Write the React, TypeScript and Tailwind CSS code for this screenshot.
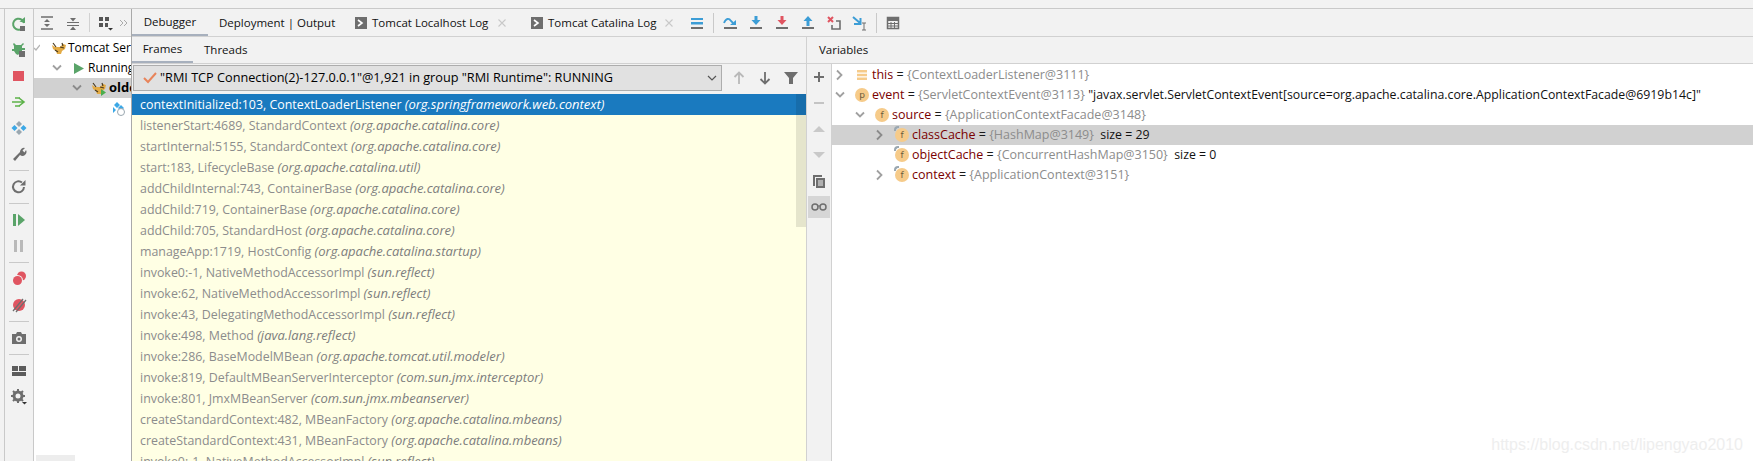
import type { ReactNode } from 'react';

const frames: [string, string][] = [
  ['listenerStart:4689, StandardContext', '(org.apache.catalina.core)'],
  ['startInternal:5155, StandardContext', '(org.apache.catalina.core)'],
  ['start:183, LifecycleBase', '(org.apache.catalina.util)'],
  ['addChildInternal:743, ContainerBase', '(org.apache.catalina.core)'],
  ['addChild:719, ContainerBase', '(org.apache.catalina.core)'],
  ['addChild:705, StandardHost', '(org.apache.catalina.core)'],
  ['manageApp:1719, HostConfig', '(org.apache.catalina.startup)'],
  ['invoke0:-1, NativeMethodAccessorImpl', '(sun.reflect)'],
  ['invoke:62, NativeMethodAccessorImpl', '(sun.reflect)'],
  ['invoke:43, DelegatingMethodAccessorImpl', '(sun.reflect)'],
  ['invoke:498, Method', '(java.lang.reflect)'],
  ['invoke:286, BaseModelMBean', '(org.apache.tomcat.util.modeler)'],
  ['invoke:819, DefaultMBeanServerInterceptor', '(com.sun.jmx.interceptor)'],
  ['invoke:801, JmxMBeanServer', '(com.sun.jmx.mbeanserver)'],
  ['createStandardContext:482, MBeanFactory', '(org.apache.catalina.mbeans)'],
  ['createStandardContext:431, MBeanFactory', '(org.apache.catalina.mbeans)'],
  ['invoke0:-1, NativeMethodAccessorImpl', '(sun.reflect)'],
];

function Ico({ children, w = 16, h = 16 }: { children: ReactNode; w?: number; h?: number }) {
  return (
    <svg width={w} height={h} viewBox={`0 0 ${w} ${h}`} className="shrink-0">
      {children}
    </svg>
  );
}

function Chevron({ open, color = '#a0a0a0' }: { open?: boolean; color?: string }) {
  return (
    <Ico w={12} h={12}>
      <path d={open ? 'M1 3.500l4 4 4-4' : 'M2 1.500l4.500 4.500-4.500 4.500'} fill="none" stroke={color} strokeWidth="1.800" />
    </Ico>
  );
}

function Cat({ running }: { running?: boolean }) {
  return (
    <Ico>
      <path d="M1 5l3 2 5 0 3-3 3 1-1 4-3 2-1 3H6l-1-3-3-2z" fill="#e3ab45" />
      <path d="M2 3l3 4M4 10l3 2M9 7l4 1M11 3l1 3" stroke="#4a3b20" strokeWidth="1.200" fill="none" />
      {running && <path d="M10 9l5 3.500-5 3.500z" fill="#4cae4f" />}
    </Ico>
  );
}

function Close() {
  return (
    <Ico w={8} h={8}>
      <path d="M0.500 0.500l7 7M7.500 0.500l-7 7" stroke="#c8c8c8" strokeWidth="1.100" />
    </Ico>
  );
}

function LogIcon() {
  return (
    <span className="flex h-3 w-3 shrink-0 items-center justify-center bg-[#6e6e6e]">
      <Ico w={12} h={12}>
        <path d="M3 3l4 3-4 3" fill="none" stroke="#fff" strokeWidth="1.600" />
      </Ico>
    </span>
  );
}

function FieldIcon({ letter, mark }: { letter: string; mark?: boolean }) {
  return (
    <span className="relative flex h-[14px] w-[14px] shrink-0 items-center justify-center rounded-full bg-[#f6cb8a] font-['DejaVu_Sans',sans-serif] text-[9px] leading-none text-[#6b5a3a]">
      {letter}
      {mark && <span className="absolute -left-[1px] -top-[2px] h-[5px] w-[5px] rounded-tl-[4px] border-l-2 border-t-2 border-[#9aa7b0]" />}
    </span>
  );
}

function VarRow({
  indent,
  arrow,
  icon,
  name,
  type,
  extra,
  selected,
}: {
  indent: number;
  arrow?: 'open' | 'closed';
  icon: ReactNode;
  name: string;
  type: string;
  extra?: string;
  selected?: boolean;
}) {
  return (
    <div className={`flex h-5 items-center whitespace-pre text-[12.5px] ${selected ? 'bg-[#d1d1d1]' : ''}`}>
      <span style={{ width: indent }} className="shrink-0" />
      <span className="flex w-[20px] shrink-0 items-center">{arrow && <Chevron open={arrow === 'open'} color={selected ? '#8a8a8a' : '#a0a0a0'} />}</span>
      <span className="mr-[3px] flex w-[14px] shrink-0 items-center justify-center">{icon}</span>
      <span className="text-[#7a0000]">{name}</span>
      <span className="text-[#1a1a1a]"> = </span>
      <span className="text-[#8c8c8c]">{type}</span>
      {extra && <span className="text-[12.3px] text-[#111]">{extra}</span>}
    </div>
  );
}

function Sep() {
  return <div className="-my-[2px] h-px w-[20px] shrink-0 bg-[#c9c9c9]" />;
}

function LeftToolbar() {
  return (
    <div className="flex w-[29px] shrink-0 flex-col items-center gap-[10px] border-r border-[#c9c9c9] bg-[#f2f2f2] pt-[7px]">
      <Ico>
        <path d="M13 7a5.500 5.500 0 1 0-4 6.500" fill="none" stroke="#5aa469" strokeWidth="2" />
        <path d="M8.500 5.500l5.500 1.500V1z" fill="#5aa469" />
        <rect x="9" y="10" width="5" height="5" fill="#6e6e6e" />
      </Ico>
      <Ico>
        <path d="M3 1l2 2h5l2-2 1 1-2 2v2h3v2h-3v1l-4 4-2-1-2-3H1V7h2V4L2 2z" fill="#5aa469" />
        <rect x="8" y="9" width="6" height="6" fill="#6e6e6e" />
      </Ico>
      <Ico>
        <rect x="2" y="3" width="11" height="10" fill="#e05561" />
      </Ico>
      <Ico>
        <path d="M1 8h11M8 4l5 4-5 4" fill="none" stroke="#5db34a" strokeWidth="1.600" />
        <path d="M4 4h5M4 12h5" stroke="#5db34a" strokeWidth="1.400" />
      </Ico>
      <Ico>
        <path d="M8 1l3 3-3 3-3-3z" fill="#9aa7b0" />
        <path d="M3.500 5l3 3-3 3-3-3z" fill="#3ca8e6" />
        <path d="M12.500 5l3 3-3 3-3-3z" fill="#3ca8e6" />
        <path d="M8 9l3 3-3 3-3-3z" fill="#9aa7b0" />
      </Ico>
      <Ico>
        <path d="M2 13l7-7a4 4 0 0 1 5-4l-2.500 2.500 2 2L15 4a4 4 0 0 1-6 5l-5 6z" fill="#6e6e6e" />
      </Ico>
      <Sep />
      <Ico>
        <path d="M13 8a5.500 5.500 0 1 1-2-4.500" fill="none" stroke="#6e6e6e" strokeWidth="2" />
        <path d="M9 6.500l5.500 0V1z" fill="#6e6e6e" />
      </Ico>
      <Sep />
      <Ico>
        <rect x="2" y="2" width="3" height="12" fill="#5aa469" />
        <path d="M7 2l7 6-7 6z" fill="#5aa469" />
      </Ico>
      <Ico>
        <rect x="3" y="2" width="3" height="12" fill="#b9b9b9" />
        <rect x="9" y="2" width="3" height="12" fill="#b9b9b9" />
      </Ico>
      <Sep />
      <Ico>
        <circle cx="10.500" cy="5" r="4.500" fill="#e05561" />
        <circle cx="6.500" cy="9.500" r="5.500" fill="#f2f2f2" />
        <circle cx="6.500" cy="9.500" r="4.500" fill="#e05561" />
      </Ico>
      <Ico>
        <circle cx="8" cy="8" r="6" fill="#e05561" />
        <path d="M2 14L12 2M5 15L15 3" stroke="#6e6e6e" strokeWidth="1.300" />
      </Ico>
      <Sep />
      <Ico>
        <path d="M1 4h4l1-2h4l1 2h4v10H1z" fill="#6e6e6e" />
        <circle cx="8" cy="9" r="3" fill="#f2f2f2" />
        <circle cx="8" cy="9" r="1.500" fill="#6e6e6e" />
      </Ico>
      <Sep />
      <Ico>
        <rect x="1" y="3" width="6" height="5" fill="#5c5c5c" />
        <rect x="8" y="3" width="7" height="5" fill="#5c5c5c" />
        <rect x="1" y="9" width="14" height="4" fill="#5c5c5c" />
      </Ico>
      <Ico>
        <circle cx="7" cy="7" r="4" fill="none" stroke="#6e6e6e" strokeWidth="3" />
        <path d="M7 0v3M7 11v3M0 7h3M11 7h3M2 2l2 2M10 10l2 2M2 12l2-2M10 4l2-2" stroke="#6e6e6e" strokeWidth="2" />
        <path d="M11 13h5l-2.500 2.500z" fill="#333" />
      </Ico>
    </div>
  );
}

function ServicesTree() {
  return (
    <div className="relative flex w-[97px] shrink-0 flex-col overflow-hidden bg-white">
      <div className="flex h-[28px] shrink-0 items-center gap-[10px] border-b border-[#d1d1d1] bg-[#f2f2f2] pl-[5px]">
        <Ico>
          <path d="M2 2h12M2 14h12" stroke="#6e6e6e" strokeWidth="1.400" />
          <path d="M8 4l3 3H5zM8 12l3-3H5z" fill="#6e6e6e" />
        </Ico>
        <Ico>
          <path d="M2 7.500h12M2 10.500h12" stroke="#6e6e6e" strokeWidth="1" />
          <path d="M8 6.500l3-3.500H5zM8 11.500l3 3.500H5z" fill="#6e6e6e" />
        </Ico>
        <div className="-mx-[2px] h-[19px] w-px bg-[#d1d1d1]" />
        <Ico>
          <rect x="1" y="2" width="4" height="4" fill="#555" />
          <rect x="7" y="2" width="4" height="4" fill="#555" />
          <rect x="1" y="8" width="4" height="4" fill="#555" />
          <rect x="7" y="8" width="3" height="4" fill="#555" />
          <path d="M10 13h5l-2.500 2.500z" fill="#333" />
        </Ico>
        <span className="-ml-[5px]">
          <Ico w={9} h={8}>
            <path d="M1 1l3 3-3 3M5 1l3 3-3 3" fill="none" stroke="#aaa" />
          </Ico>
        </span>
      </div>
      <div className="pt-px whitespace-nowrap text-[12px] text-black">
        <div className="flex h-5 items-center">
          <Ico w={6} h={8}>
            <path d="M0 4l2 2 4-5" fill="none" stroke="#b5b5b5" strokeWidth="1.300" />
          </Ico>
          <span className="ml-[11px]">
            <Cat />
          </span>
          <span className="ml-[1px]">Tomcat Ser</span>
        </div>
        <div className="flex h-5 items-center pl-[18px]">
          <Chevron open />
          <span className="ml-[10px] flex">
            <Ico w={12} h={14}>
              <path d="M0 2l10 5.500-10 5.500z" fill="#5aa469" />
            </Ico>
          </span>
          <span className="ml-[2px]">Running</span>
        </div>
        <div className="flex h-5 items-center bg-[#d1d1d1] pl-[38px]">
          <Chevron open color="#8a8a8a" />
          <span className="ml-[7px]">
            <Cat running />
          </span>
          <span className="ml-[2px] text-[13px] font-bold">oldc</span>
        </div>
        <div className="flex h-5 items-center pl-[78px] pt-[2px]">
          <Ico>
            <path d="M5 1l3 3-3 3-3-3zM1 6l3 3-3 3zM9 4l3 3-3 3-3-3z" fill="#3ca8e6" />
            <circle cx="9" cy="11" r="3.500" fill="#fff" stroke="#9aa7b0" />
          </Ico>
        </div>
      </div>
      <div className="absolute bottom-0 left-[2px] h-[6px] w-[39px] bg-[#ededed]" />
    </div>
  );
}

function DebugTabs() {
  return (
    <div className="flex h-[28px] shrink-0 items-center whitespace-nowrap border-b border-[#d1d1d1] bg-[#f2f2f2] text-[11.5px] text-[#111]">
      <div className="flex h-full w-[76px] items-center justify-center border-b-[2px] border-[#a7b0bd]">Debugger</div>
      <div className="ml-[11px] w-[111px]">Deployment | Output</div>
      <div className="ml-[25px]">
        <LogIcon />
      </div>
      <span className="ml-[5px] w-[116px]">Tomcat Localhost Log</span>
      <span className="ml-[10px] flex">
        <Close />
      </span>
      <div className="ml-[25px]">
        <LogIcon />
      </div>
      <span className="ml-[5px] w-[106px]">Tomcat Catalina Log</span>
      <span className="ml-[11px] flex">
        <Close />
      </span>
      <div className="ml-[16px] flex items-center gap-[10px]">
        <Ico>
          <rect x="2" y="3" width="12" height="2" fill="#3c9dd6" />
          <rect x="2" y="7" width="12" height="2.500" fill="#3c9dd6" />
          <rect x="2" y="12" width="12" height="2" fill="#6e6e6e" />
        </Ico>
        <div className="-mx-[2px] h-[20px] w-px bg-[#c9c9c9]" />
        <Ico>
          <path d="M2 8c2-5 5-5 7-2l2 2" fill="none" stroke="#3c9dd6" strokeWidth="1.800" />
          <path d="M8 10h6V5z" fill="#3c9dd6" />
          <rect x="2" y="12" width="13" height="2" fill="#6e6e6e" />
        </Ico>
        <Ico>
          <path d="M6.500 1h3v4h3L8 10 3.500 5h3z" fill="#3c9dd6" />
          <rect x="2" y="12" width="12" height="2" fill="#6e6e6e" />
        </Ico>
        <Ico>
          <path d="M6.500 1h3v4h3L8 10 3.500 5h3z" fill="#e05561" />
          <rect x="2" y="12" width="12" height="2" fill="#6e6e6e" />
        </Ico>
        <Ico>
          <path d="M6.500 11h3V6h3L8 1 3.500 6h3z" fill="#3c9dd6" />
          <rect x="2" y="12" width="12" height="2" fill="#6e6e6e" />
        </Ico>
        <Ico>
          <path d="M2 2l5 5M7 2L2 7" stroke="#e05561" strokeWidth="2" />
          <path d="M10 6h4v8H6v-4" fill="none" stroke="#6e6e6e" strokeWidth="1.600" />
        </Ico>
        <Ico>
          <path d="M1 2l7 6M2 9h6.500V3" fill="none" stroke="#3c9dd6" strokeWidth="2" />
          <path d="M10 8h4M12 8v7M10 15h4" stroke="#6e6e6e" strokeWidth="1" />
        </Ico>
        <div className="-mx-[2px] h-[20px] w-px bg-[#c9c9c9]" />
        <Ico>
          <rect x="2.500" y="2.500" width="11" height="11" fill="none" stroke="#6e6e6e" strokeWidth="1.500" />
          <path d="M2 4.500h12" stroke="#6e6e6e" strokeWidth="3" />
          <path d="M6 7v6M9.500 7v6M3 8.500h10M3 11h10" stroke="#6e6e6e" strokeWidth="1" />
        </Ico>
      </div>
    </div>
  );
}

function FramesPanel() {
  return (
    <div className="flex w-[675px] shrink-0 flex-col overflow-hidden border-r border-[#d1d1d1]">
      <div className="flex h-[27px] shrink-0 items-center border-b border-[#d1d1d1] text-[11.5px] text-[#111]">
        <div className="flex h-full w-[61px] items-center justify-center border-b-[2px] border-[#a7b0bd]">Frames</div>
        <div className="ml-[11px]">Threads</div>
      </div>
      <div className="flex h-[30px] shrink-0 items-center pb-[2px] pl-[1px]">
        <div className="flex h-[26px] w-[589px] items-center border border-[#adadad] bg-[#e1e1e1] pl-[8px] pr-[3px] text-[12.7px] text-black">
          <Ico>
            <path d="M2 8l4 4 8-9" fill="none" stroke="#e8845a" strokeWidth="2" />
          </Ico>
          <span className="ml-[2px] flex-1 whitespace-nowrap">"RMI TCP Connection(2)-127.0.0.1"@1,921 in group "RMI Runtime": RUNNING</span>
          <Ico w={12} h={12}>
            <path d="M2 4l4 4 4-4" fill="none" stroke="#555" strokeWidth="1.200" />
          </Ico>
        </div>
        <div className="ml-[9px] flex gap-[10px]">
          <Ico>
            <path d="M8 14V3M3.500 7L8 2.500 12.500 7" fill="none" stroke="#b9b9b9" strokeWidth="1.800" />
          </Ico>
          <Ico>
            <path d="M8 2v11M3.500 9L8 13.500 12.500 9" fill="none" stroke="#6e6e6e" strokeWidth="1.800" />
          </Ico>
          <Ico>
            <path d="M1 2h14L10 8v6H6V8z" fill="#6e6e6e" />
          </Ico>
        </div>
      </div>
      <div className="relative flex-1 overflow-hidden bg-[#ffffe4] text-[12.4px]">
        <div className="flex h-[21px] items-center whitespace-pre bg-[#1a7abf] pl-[8px] pt-px text-white">
          <span>contextInitialized:103, ContextLoaderListener </span>
          <span className="text-[13px] italic">(org.springframework.web.context)</span>
        </div>
        {frames.map(([method, pkg], i) => (
          <div key={i} className="flex h-[21px] items-center whitespace-pre pl-[8px] pt-px text-[#8c8c8c]">
            <span>{method} </span>
            <span className="text-[13px] italic text-[#7d7d7d]">{pkg}</span>
          </div>
        ))}
        <div className="absolute right-0 top-0 h-[133px] w-[10px] bg-black/10" />
      </div>
    </div>
  );
}

function VariablesPanel() {
  return (
    <div className="flex min-w-0 flex-1 flex-col">
      <div className="flex h-[27px] shrink-0 items-center border-b border-[#d1d1d1] pl-[12px] text-[11.5px] text-[#111]">Variables</div>
      <div className="flex flex-1">
        <div className="flex w-[25px] shrink-0 flex-col items-center gap-[10px] border-r border-[#d1d1d1] bg-[#f2f2f2] pt-[5px]">
          <Ico>
            <path d="M8 3v10M3 8h10" stroke="#6e6e6e" strokeWidth="2" />
          </Ico>
          <Ico>
            <path d="M3 8h10" stroke="#c4c4c4" strokeWidth="2" />
          </Ico>
          <Ico>
            <path d="M2 11l6-6 6 6z" fill="#c9c9c9" />
          </Ico>
          <Ico>
            <path d="M2 5l6 6 6-6z" fill="#c9c9c9" />
          </Ico>
          <Ico>
            <path d="M2 2h9v2H4v9H2z" fill="#6e6e6e" />
            <path d="M5 5h9v10H5z" fill="#6e6e6e" />
            <path d="M7 8h5M7 10h5M7 12h5" stroke="#f2f2f2" />
          </Ico>
          <div className="-mt-[3px] flex h-[22px] w-[22px] items-center justify-center bg-[#d6d6d6]">
            <Ico>
              <circle cx="4" cy="8" r="3" fill="none" stroke="#6e6e6e" strokeWidth="1.500" />
              <circle cx="12" cy="8" r="3" fill="none" stroke="#6e6e6e" strokeWidth="1.500" />
              <path d="M7 7h2" stroke="#6e6e6e" />
            </Ico>
          </div>
        </div>
        <div className="min-w-0 flex-1 bg-white pt-[1px]">
          <VarRow
            indent={3}
            arrow="closed"
            icon={
              <Ico w={14} h={14}>
                <path d="M2 2h10v2.500H2zM2 5.800h10v2.500H2zM2 9.600h10v2.500H2z" fill="#f6cb8a" />
              </Ico>
            }
            name="this"
            type="{ContextLoaderListener@3111}"
          />
          <VarRow
            indent={3}
            arrow="open"
            icon={<FieldIcon letter="p" />}
            name="event"
            type="{ServletContextEvent@3113}"
            extra={' "javax.servlet.ServletContextEvent[source=org.apache.catalina.core.ApplicationContextFacade@6919b14c]"'}
          />
          <VarRow indent={23} arrow="open" icon={<FieldIcon letter="f" />} name="source" type="{ApplicationContextFacade@3148}" />
          <VarRow indent={43} arrow="closed" icon={<FieldIcon letter="f" mark />} name="classCache" type="{HashMap@3149}" extra="  size = 29" selected />
          <VarRow indent={43} icon={<FieldIcon letter="f" mark />} name="objectCache" type="{ConcurrentHashMap@3150}" extra="  size = 0" />
          <VarRow indent={43} arrow="closed" icon={<FieldIcon letter="f" mark />} name="context" type="{ApplicationContext@3151}" />
        </div>
      </div>
    </div>
  );
}

export default function App() {
  return (
    <div className="relative flex h-[461px] w-[1753px] flex-col overflow-hidden bg-[#f2f2f2] font-['Open_Sans',sans-serif]">
      <div className="h-[9px] shrink-0 border-b border-[#c9c9c9]" />
      <div className="flex min-h-0 flex-1">
        <div className="w-[5px] shrink-0 border-r border-[#c9c9c9]" />
        <LeftToolbar />
        <ServicesTree />
        <div className="flex min-w-0 flex-1 flex-col border-l border-[#a9a9a9]">
          <DebugTabs />
          <div className="flex min-h-0 flex-1">
            <FramesPanel />
            <VariablesPanel />
          </div>
        </div>
      </div>
      <div className="absolute bottom-[8px] right-[10px] font-['Liberation_Sans',sans-serif] text-[16px] leading-none text-[#eeeeee]">https://blog.csdn.net/lipengyao2010</div>
    </div>
  );
}
